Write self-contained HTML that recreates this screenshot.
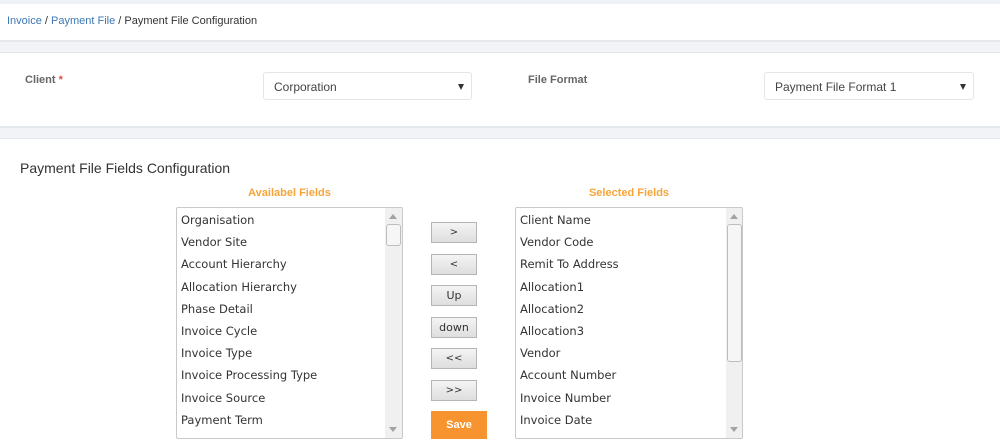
<!DOCTYPE html><html><head><style>
*{margin:0;padding:0;box-sizing:border-box}
body{width:1000px;height:443px;overflow:hidden;background:#fff;font-family:"Liberation Sans",Arial,sans-serif;position:relative}
.a{position:absolute}
.sel{position:absolute;height:28px;border:1px solid #e3e5e8;border-radius:3px;background:#fff;font-size:12px;color:#444;padding:7px 0 0 10px}
.sel:after{content:"";position:absolute;right:7px;top:11px;border-left:3px solid transparent;border-right:3px solid transparent;border-top:6px solid #333}
.lb{position:absolute;border:1px solid #c9c9c9;border-radius:2px;background:#fff;font-family:"DejaVu Sans",Verdana,sans-serif;font-size:11.5px;color:#333;padding-top:4px}
.lb .it{height:22.2px;line-height:17px;padding-left:4px}
.sb{position:absolute;right:0;top:0;bottom:0;width:17px;background:#f0f0f0}
.th{position:absolute;left:1px;width:15px;background:#f6f6f6;border:1px solid #bdbdbd;border-radius:3px}
.up,.dn{position:absolute;left:4px;width:0;height:0;border-left:4px solid transparent;border-right:4px solid transparent}
.up{top:6px;border-bottom:5px solid #a3a3a3}.dn{bottom:6px;border-top:5px solid #a3a3a3}
.bt{position:absolute;left:431px;width:46px;height:21px;border:1px solid #b5b5b5;background:linear-gradient(#f4f4f4,#dedede);font-family:"DejaVu Sans",Verdana,sans-serif;font-size:10px;color:#333;text-align:center;line-height:19px}
.hd{position:absolute;font-size:11px;font-weight:bold;color:#f7a43b;text-align:center}
</style></head><body>
<div class="a" style="left:0;top:0;width:1000px;height:4px;background:#eef1f5"></div>
<div class="a" style="left:7px;top:15px;font-size:11px;color:#333"><span style="color:#3e78b4">Invoice</span> / <span style="color:#3e78b4">Payment File</span> / Payment File Configuration</div>
<div class="a" style="left:0;top:40px;width:1000px;height:13px;background:#f1f3f6;border-top:2px solid #e4e7eb;border-bottom:1px solid #e4e7eb"></div>
<div class="a" style="left:0;top:126px;width:1000px;height:13px;background:#f1f3f6;border-top:2px solid #e4e7eb;border-bottom:1px solid #e4e7eb"></div>
<div class="a" style="left:25px;top:74px;font-size:11px;font-weight:bold;color:#666">Client <span style="color:#d9534f">*</span></div>
<div class="sel" style="left:263px;top:72px;width:209px">Corporation</div>
<div class="a" style="left:528px;top:74px;font-size:11px;font-weight:bold;color:#666">File Format</div>
<div class="sel" style="left:764px;top:72px;width:210px">Payment File Format 1</div>
<div class="a" style="left:20px;top:160px;font-size:14px;color:#333">Payment File Fields Configuration</div>
<div class="hd" style="left:176px;top:187px;width:227px">Availabel Fields</div>
<div class="hd" style="left:515px;top:187px;width:228px">Selected Fields</div>
<div class="lb" style="left:176px;top:207px;width:227px;height:232px">
<div class="it">Organisation</div><div class="it">Vendor Site</div><div class="it">Account Hierarchy</div><div class="it">Allocation Hierarchy</div><div class="it">Phase Detail</div><div class="it">Invoice Cycle</div><div class="it">Invoice Type</div><div class="it">Invoice Processing Type</div><div class="it">Invoice Source</div><div class="it">Payment Term</div>
<div class="sb"><div class="up"></div><div class="th" style="top:16px;height:22px"></div><div class="dn"></div></div></div>
<div class="lb" style="left:515px;top:207px;width:228px;height:232px">
<div class="it">Client Name</div><div class="it">Vendor Code</div><div class="it">Remit To Address</div><div class="it">Allocation1</div><div class="it">Allocation2</div><div class="it">Allocation3</div><div class="it">Vendor</div><div class="it">Account Number</div><div class="it">Invoice Number</div><div class="it">Invoice Date</div>
<div class="sb" style="width:16px"><div class="up"></div><div class="th" style="top:16px;height:138px"></div><div class="dn"></div></div></div>
<div class="bt" style="top:222px">&gt;</div>
<div class="bt" style="top:254px">&lt;</div>
<div class="bt" style="top:285px;font-size:11px">Up</div>
<div class="bt" style="top:317px;font-size:11px">down</div>
<div class="bt" style="top:348px">&lt;&lt;</div>
<div class="bt" style="top:380px">&gt;&gt;</div>
<div class="a" style="left:431px;top:411px;width:56px;height:28px;background:#f7942f;color:#fff;font-size:11px;font-weight:bold;text-align:center;line-height:28px">Save</div>
</body></html>
